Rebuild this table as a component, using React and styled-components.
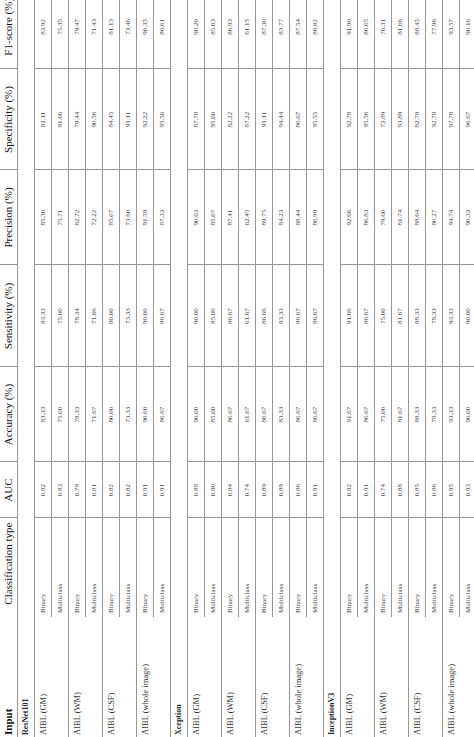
import React from 'react'
import styled, { createGlobalStyle } from 'styled-components'

const Global = createGlobalStyle`
  html, body {
    margin: 0;
    padding: 0;
    background: #fff;
  }
`

const LINE = '#969696'

const Page = styled.div`
  width: 474px;
  height: 737px;
  overflow: hidden;
  background: #fff;
`

// the table is printed sideways, so it is laid out flat and turned
const Turned = styled.div`
  width: 752px;
  transform-origin: 0 0;
  transform: translateY(737px) rotate(-90deg);
`

const Table = styled.table`
  width: 752px;
  table-layout: fixed;
  border-collapse: collapse;
  font-family: 'Liberation Serif', 'Times New Roman', serif;
  color: #444;
`

const Row = styled.tr`
  height: 17px;
`

const Cell = styled.td`
  padding: 0;
  height: 16px;
  white-space: nowrap;
  vertical-align: middle;
  border-bottom: 1px solid ${LINE};
  border-left: ${p => (p.$ruled ? `1px solid ${LINE}` : 'none')};
`

const HeadCell = styled(Cell).attrs({ as: 'th' })`
  font-size: 11px;
  font-weight: ${p => (p.$bold ? 700 : 400)};
  color: #111;
  text-align: ${p => p.$align || 'center'};
  padding: ${p => p.$pad || '0'};
`

const GroupCell = styled(Cell)`
  font-size: 8px;
  font-weight: 700;
  color: #2a2a2a;
  padding-left: 2px;
`

const InputCell = styled(Cell)`
  vertical-align: top;
  line-height: 16px;
  font-size: 8.5px;
  color: #333;
  padding-left: 2px;
`

const TypeCell = styled(Cell)`
  font-size: 7px;
  padding-left: 4px;
`

const ValueCell = styled(Cell)`
  font-size: 7px;
  text-align: center;
`

const widths = [120, 99, 56, 95, 102, 95, 101, 84]

const metrics = ['AUC', 'Accuracy (%)', 'Sensitivity (%)', 'Precision (%)', 'Specificity (%)', 'F1-score (%)']

const groups = [
  {
    name: 'ResNet101',
    inputs: [
      ['AIBL (GM)', ['0.82', '83.33', '83.33', '85.30', '81.11', '83.92'], ['0.83', '75.00', '75.00', '75.71', '91.66', '75.35']],
      ['AIBL (WM)', ['0.79', '78.33', '78.34', '82.72', '79.44', '79.47'], ['0.81', '71.67', '71.66', '72.22', '90.56', '71.43']],
      ['AIBL (CSF)', ['0.82', '80.00', '80.00', '85.07', '84.45', '81.13'], ['0.82', '73.33', '73.33', '73.60', '91.11', '73.46']],
      ['AIBL (whole image)', ['0.91', '90.00', '90.00', '91.59', '92.22', '90.35'], ['0.91', '86.67', '86.67', '87.33', '95.56', '86.61']],
    ],
  },
  {
    name: 'Xception',
    inputs: [
      ['AIBL (GM)', ['0.89', '90.00', '90.00', '90.63', '87.78', '90.20'], ['0.90', '85.00', '85.00', '85.07', '95.00', '85.03']],
      ['AIBL (WM)', ['0.84', '86.67', '86.67', '87.41', '82.22', '86.93'], ['0.74', '61.67', '61.67', '62.45', '87.22', '61.15']],
      ['AIBL (CSF)', ['0.89', '86.67', '86.66', '89.75', '91.11', '87.30'], ['0.89', '83.33', '83.33', '84.23', '94.44', '83.77']],
      ['AIBL (whole image)', ['0.86', '86.67', '86.67', '88.44', '86.67', '87.54'], ['0.91', '86.67', '86.67', '86.99', '95.55', '86.82']],
    ],
  },
  {
    name: 'InceptionV3',
    inputs: [
      ['AIBL (GM)', ['0.92', '91.67', '91.66', '92.66', '92.78', '91.90'], ['0.91', '86.67', '86.67', '86.83', '95.56', '86.65']],
      ['AIBL (WM)', ['0.74', '75.00', '75.00', '79.60', '73.89', '76.31'], ['0.88', '81.67', '81.67', '81.74', '93.89', '81.66']],
      ['AIBL (CSF)', ['0.85', '88.33', '88.33', '88.64', '82.78', '88.45'], ['0.86', '78.33', '78.33', '80.27', '92.78', '77.96']],
      ['AIBL (whole image)', ['0.95', '93.33', '93.33', '94.74', '97.78', '93.57'], ['0.93', '90.00', '90.00', '90.33', '96.67', '90.16']],
    ],
  },
]

const Values = ({ list }) =>
  list.map((v, i) => (
    <ValueCell key={i} $ruled>
      {v}
    </ValueCell>
  ))

export default function App() {
  return (
    <Page>
      <Global />
      <Turned>
        <Table>
          <colgroup>
            {widths.map((w, i) => (
              <col key={i} style={{ width: w }} />
            ))}
          </colgroup>
          <thead>
            <Row>
              <HeadCell $bold $align="left" $pad="0 0 0 2px">Input</HeadCell>
              <HeadCell $align="right" $pad="0 4px 0 0">Classification type</HeadCell>
              {metrics.map(m => (
                <HeadCell key={m} $ruled>{m}</HeadCell>
              ))}
            </Row>
          </thead>
          <tbody>
            {groups.map(g => (
              <React.Fragment key={g.name}>
                <Row>
                  <GroupCell colSpan={8}>{g.name}</GroupCell>
                </Row>
                {g.inputs.map(([label, bin, multi]) => (
                  <React.Fragment key={label}>
                    <Row>
                      <InputCell rowSpan={2}>{label}</InputCell>
                      <TypeCell>Binary</TypeCell>
                      <Values list={bin} />
                    </Row>
                    <Row>
                      <TypeCell>Multiclass</TypeCell>
                      <Values list={multi} />
                    </Row>
                  </React.Fragment>
                ))}
              </React.Fragment>
            ))}
          </tbody>
        </Table>
      </Turned>
    </Page>
  )
}
